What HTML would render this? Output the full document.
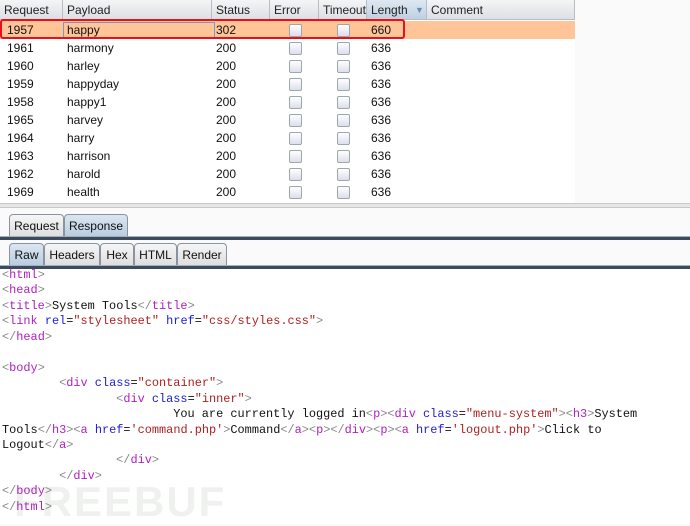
<!DOCTYPE html>
<html><head><meta charset="utf-8"><style>
body{margin:0;width:690px;height:524px;overflow:hidden;background:#fafafa;font-family:"Liberation Sans",sans-serif;position:relative}
.tbl{position:absolute;left:0;top:0;width:575px;height:203px;background:#fff}
.hdr{position:absolute;top:0;height:20px;background:linear-gradient(#f4f5f7,#dcdfe4);border-right:1px solid #b8bcc4;border-bottom:1px solid #b8bcc4;font-size:12px;line-height:20px;padding-left:4px;box-sizing:border-box;color:#222}
.row{position:absolute;left:0;width:575px;height:18px;font-size:12px;line-height:18px;color:#111}
.row span{position:absolute;top:0}
.cb{position:absolute;top:3px;width:11px;height:11px;border:1px solid #9aa;border-radius:2px;background:linear-gradient(#fff,#dde)}
.tab{position:absolute;height:22px;border:1px solid #8a94a0;border-bottom:none;border-radius:4px 4px 0 0;background:linear-gradient(#f6f6f6,#dedede);font-size:12px;line-height:22px;text-align:center;box-sizing:border-box;color:#111}
.tab.sel{background:linear-gradient(#dbe6f0,#b9cde0)}
.line{position:absolute;left:0;width:690px;height:3px;background:#3d4a5a;border-top:1px solid #9fb0c2}
.code{position:absolute;left:2px;top:268px;font-family:"Liberation Mono",monospace;font-size:11.9px;line-height:15.45px;white-space:pre;color:#111}
.b{color:#888}.t{color:#b020c0}.a{color:#2020d0}.v{color:#b02020}
</style></head><body>
<div class="tbl">
<div class="hdr" style="left:0;width:63px">Request</div>
<div class="hdr" style="left:63px;width:149px">Payload</div>
<div class="hdr" style="left:212px;width:58px">Status</div>
<div class="hdr" style="left:270px;width:49px">Error</div>
<div class="hdr" style="left:319px;width:48px">Timeout</div>
<div class="hdr" style="left:367px;width:60px;background:linear-gradient(#dfe8f2,#bfd0e2)">Length<span style="position:absolute;left:48px;color:#6a8ab0;font-size:9px">▼</span></div>
<div class="hdr" style="left:427px;width:148px">Comment</div>
<div class="row" style="top:21px;background:#ffc497"><span style="left:7px">1957</span><span style="left:63px;top:1px;width:147px;height:15px;border:1px solid #7a9ac0;line-height:15px;padding-left:3px">happy</span><span style="left:216px">302</span><i class="cb" style="left:289px"></i><i class="cb" style="left:337px"></i><span style="left:371px">660</span></div>
<div class="row" style="top:39px"><span style="left:7px">1961</span><span style="left:67px">harmony</span><span style="left:216px">200</span><i class="cb" style="left:289px"></i><i class="cb" style="left:337px"></i><span style="left:371px">636</span></div>
<div class="row" style="top:57px"><span style="left:7px">1960</span><span style="left:67px">harley</span><span style="left:216px">200</span><i class="cb" style="left:289px"></i><i class="cb" style="left:337px"></i><span style="left:371px">636</span></div>
<div class="row" style="top:75px"><span style="left:7px">1959</span><span style="left:67px">happyday</span><span style="left:216px">200</span><i class="cb" style="left:289px"></i><i class="cb" style="left:337px"></i><span style="left:371px">636</span></div>
<div class="row" style="top:93px"><span style="left:7px">1958</span><span style="left:67px">happy1</span><span style="left:216px">200</span><i class="cb" style="left:289px"></i><i class="cb" style="left:337px"></i><span style="left:371px">636</span></div>
<div class="row" style="top:111px"><span style="left:7px">1965</span><span style="left:67px">harvey</span><span style="left:216px">200</span><i class="cb" style="left:289px"></i><i class="cb" style="left:337px"></i><span style="left:371px">636</span></div>
<div class="row" style="top:129px"><span style="left:7px">1964</span><span style="left:67px">harry</span><span style="left:216px">200</span><i class="cb" style="left:289px"></i><i class="cb" style="left:337px"></i><span style="left:371px">636</span></div>
<div class="row" style="top:147px"><span style="left:7px">1963</span><span style="left:67px">harrison</span><span style="left:216px">200</span><i class="cb" style="left:289px"></i><i class="cb" style="left:337px"></i><span style="left:371px">636</span></div>
<div class="row" style="top:165px"><span style="left:7px">1962</span><span style="left:67px">harold</span><span style="left:216px">200</span><i class="cb" style="left:289px"></i><i class="cb" style="left:337px"></i><span style="left:371px">636</span></div>
<div class="row" style="top:183px"><span style="left:7px">1969</span><span style="left:67px">health</span><span style="left:216px">200</span><i class="cb" style="left:289px"></i><i class="cb" style="left:337px"></i><span style="left:371px">636</span></div>
</div>
<div style="position:absolute;left:0;top:19px;width:405px;height:20px;border:2px solid #e8101a;border-radius:3px;box-sizing:border-box"></div>
<div style="position:absolute;left:0;top:203px;width:690px;height:3px;border-top:1px solid #c8c8c8;border-bottom:1px solid #c8c8c8;background:#e6e6e6"></div>
<div class="tab" style="left:9px;top:214px;width:55px">Request</div>
<div class="tab sel" style="left:64px;top:214px;width:64px">Response</div>
<div class="line" style="top:236px"></div>
<div class="tab sel" style="left:9px;top:243px;width:35px">Raw</div>
<div class="tab" style="left:44px;top:243px;width:56px">Headers</div>
<div class="tab" style="left:100px;top:243px;width:34px">Hex</div>
<div class="tab" style="left:134px;top:243px;width:43px">HTML</div>
<div class="tab" style="left:177px;top:243px;width:50px">Render</div>
<div class="line" style="top:265px"></div>
<div style="position:absolute;left:0;top:269px;width:690px;height:255px;background:#fff"></div>
<div style="position:absolute;left:14px;top:478px;font-size:42px;font-weight:bold;color:#eef1ee;letter-spacing:2px">FREEBUF</div>
<div class="code"><span class="b">&lt;</span><span class="t">html</span><span class="b">&gt;</span>
<span class="b">&lt;</span><span class="t">head</span><span class="b">&gt;</span>
<span class="b">&lt;</span><span class="t">title</span><span class="b">&gt;</span>System Tools<span class="b">&lt;/</span><span class="t">title</span><span class="b">&gt;</span>
<span class="b">&lt;</span><span class="t">link</span> <span class="a">rel</span>=<span class="v">"stylesheet"</span> <span class="a">href</span>=<span class="v">"css/styles.css"</span><span class="b">&gt;</span>
<span class="b">&lt;/</span><span class="t">head</span><span class="b">&gt;</span>

<span class="b">&lt;</span><span class="t">body</span><span class="b">&gt;</span>
        <span class="b">&lt;</span><span class="t">div</span> <span class="a">class</span>=<span class="v">"container"</span><span class="b">&gt;</span>
                <span class="b">&lt;</span><span class="t">div</span> <span class="a">class</span>=<span class="v">"inner"</span><span class="b">&gt;</span>
                        You are currently logged in<span class="b">&lt;</span><span class="t">p</span><span class="b">&gt;&lt;</span><span class="t">div</span> <span class="a">class</span>=<span class="v">"menu-system"</span><span class="b">&gt;&lt;</span><span class="t">h3</span><span class="b">&gt;</span>System
Tools<span class="b">&lt;/</span><span class="t">h3</span><span class="b">&gt;&lt;</span><span class="t">a</span> <span class="a">href</span>=<span class="v">'command.php'</span><span class="b">&gt;</span>Command<span class="b">&lt;/</span><span class="t">a</span><span class="b">&gt;&lt;</span><span class="t">p</span><span class="b">&gt;&lt;/</span><span class="t">div</span><span class="b">&gt;&lt;</span><span class="t">p</span><span class="b">&gt;&lt;</span><span class="t">a</span> <span class="a">href</span>=<span class="v">'logout.php'</span><span class="b">&gt;</span>Click to
Logout<span class="b">&lt;/</span><span class="t">a</span><span class="b">&gt;</span>
                <span class="b">&lt;/</span><span class="t">div</span><span class="b">&gt;</span>
        <span class="b">&lt;/</span><span class="t">div</span><span class="b">&gt;</span>
<span class="b">&lt;/</span><span class="t">body</span><span class="b">&gt;</span>
<span class="b">&lt;/</span><span class="t">html</span><span class="b">&gt;</span></div>
</body></html>
